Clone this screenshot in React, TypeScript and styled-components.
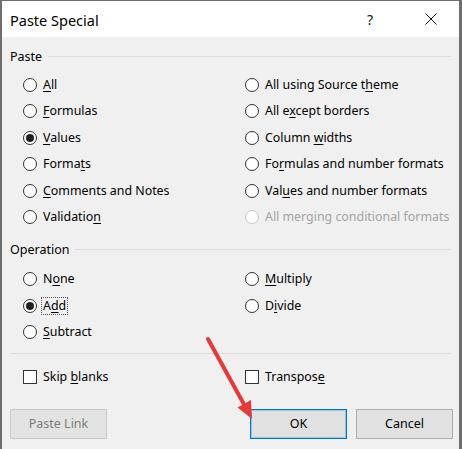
import * as React from "react";
import styled, { createGlobalStyle } from "styled-components";

const GlobalStyle = createGlobalStyle`
  html, body {
    margin: 0;
    padding: 0;
    background: #f0f0f0;
  }
  body {
    font-family: "Noto Sans", "Open Sans", sans-serif;
    color: #000;
  }
`;

const Window = styled.div`
  position: relative;
  box-sizing: border-box;
  width: 462px;
  height: 449px;
  border-left: 2px solid #6e6e6e;
  border-top: 1px solid #6e6e6e;
  border-right: 3px solid #6e6e6e;
  background: #f0f0f0;
  display: flex;
  flex-direction: column;
  overflow: hidden;
`;

const TitleBar = styled.div`
  height: 36px;
  background: #fff;
  display: flex;
  align-items: center;
  padding: 0 0 0 8px;
`;

const Title = styled.div`
  flex: 1;
  font-size: 14.5px;
  line-height: 20px;
  padding-top: 1px;
`;

const HelpButton = styled.div`
  width: 20px;
  text-align: center;
  font-size: 14px;
  margin-right: 36px;
  color: #111;
`;

const CloseButton = styled.div`
  width: 30px;
  display: flex;
  justify-content: center;
  margin-right: 13px;
`;

const Body = styled.div`
  flex: 1;
  padding: 0 6px 0 8px;
  display: flex;
  flex-direction: column;
`;

const GroupHeader = styled.div<{ $top: number }>`
  display: flex;
  align-items: center;
  height: 18px;
  margin-top: ${(p) => p.$top}px;
  font-size: 12.5px;
`;

const HeaderLine = styled.div`
  flex: 1;
  height: 1px;
  background: #dcdcdc;
  margin: 0 2px 0 6px;
`;

const Separator = styled.div`
  height: 1px;
  background: #dcdcdc;
  margin: 7px 2px 0 0;
`;

const OptionGrid = styled.div<{ $top: number }>`
  display: grid;
  grid-template-columns: 222px 1fr;
  grid-auto-rows: 26.5px;
  margin: ${(p) => p.$top}px 0 0 13px;
`;

const Option = styled.label<{ $disabled?: boolean }>`
  display: flex;
  align-items: center;
  gap: 6px;
  font-size: 12.4px;
  white-space: nowrap;
  color: ${(p) => (p.$disabled ? "#a3a3a3" : "#000")};
`;

const Radio = styled.span<{ $checked?: boolean; $disabled?: boolean }>`
  box-sizing: border-box;
  width: 14px;
  height: 14px;
  border-radius: 50%;
  border: 1px solid ${(p) => (p.$disabled ? "#c6c6c6" : "#333")};
  background: #fff;
  display: flex;
  align-items: center;
  justify-content: center;
  flex-shrink: 0;
  &::after {
    content: "";
    width: 8px;
    height: 8px;
    border-radius: 50%;
    background: ${(p) => (p.$checked ? "#222" : "transparent")};
  }
`;

const Checkbox = styled.span`
  box-sizing: border-box;
  width: 14px;
  height: 14px;
  border: 1px solid #333;
  background: #fff;
  flex-shrink: 0;
`;

const Label = styled.span<{ $focused?: boolean }>`
  padding: 0 1px;
  margin-left: -1px;
  line-height: 16px;
  outline: ${(p) => (p.$focused ? "1px dotted #555" : "none")};
  outline-offset: 0;
  u {
    text-decoration: underline;
    text-underline-offset: 2px;
    text-decoration-thickness: 1px;
  }
`;

const Buttons = styled.div`
  display: flex;
  margin-top: 18.5px;
`;

const Button = styled.div<{ $variant?: "disabled" | "default" | "normal" }>`
  box-sizing: border-box;
  width: 97px;
  height: 30px;
  display: flex;
  align-items: center;
  justify-content: center;
  font-size: 12.5px;
  background: ${(p) => (p.$variant === "disabled" ? "#e3e3e3" : "#e1e1e1")};
  color: ${(p) => (p.$variant === "disabled" ? "#7d7d7d" : "#000")};
  border: 1px solid
    ${(p) =>
      p.$variant === "default"
        ? "#0078d7"
        : p.$variant === "disabled"
        ? "#cbcbcb"
        : "#adadad"};
  box-shadow: ${(p) =>
    p.$variant === "default" ? "inset 0 0 0 1px rgba(0,120,215,0.3)" : "none"};
`;

const Spacer = styled.div`
  flex: 1;
`;

const ButtonGap = styled.div`
  width: 9px;
`;

const Arrow = styled.svg`
  position: absolute;
  left: -2px;
  top: -1px;
  pointer-events: none;
`;

type Opt = {
  pre: string;
  key?: string;
  post?: string;
  checked?: boolean;
  disabled?: boolean;
  focused?: boolean;
};

const pasteOptions: (Opt | null)[] = [
  { pre: "", key: "A", post: "ll" },
  { pre: "All using Source t", key: "h", post: "eme" },
  { pre: "", key: "F", post: "ormulas" },
  { pre: "All e", key: "x", post: "cept borders" },
  { pre: "", key: "V", post: "alues", checked: true },
  { pre: "Column ", key: "w", post: "idths" },
  { pre: "Forma", key: "t", post: "s" },
  { pre: "Fo", key: "r", post: "mulas and number formats" },
  { pre: "", key: "C", post: "omments and Notes" },
  { pre: "Val", key: "u", post: "es and number formats" },
  { pre: "Validatio", key: "n", post: "" },
  { pre: "All merging conditional formats", disabled: true },
];

const operationOptions: (Opt | null)[] = [
  { pre: "N", key: "o", post: "ne" },
  { pre: "", key: "M", post: "ultiply" },
  { pre: "A", key: "d", post: "d", checked: true, focused: true },
  { pre: "D", key: "i", post: "vide" },
  { pre: "", key: "S", post: "ubtract" },
  null,
];

const RadioOption = ({ o }: { o: Opt }) => (
  <Option $disabled={o.disabled}>
    <Radio $checked={o.checked} $disabled={o.disabled} />
    <Label $focused={o.focused}>
      {o.pre}
      {o.key && <u>{o.key}</u>}
      {o.post}
    </Label>
  </Option>
);

export default function App() {
  return (
    <>
      <GlobalStyle />
      <Window>
        <TitleBar>
          <Title>Paste Special</Title>
          <HelpButton>?</HelpButton>
          <CloseButton>
            <svg width="12" height="12" viewBox="0 0 12 12">
              <path d="M0.5 0.5 L11.5 11.5 M11.5 0.5 L0.5 11.5" stroke="#111" strokeWidth="1" />
            </svg>
          </CloseButton>
        </TitleBar>
        <Body>
          <GroupHeader $top={10}>
            Paste
            <HeaderLine />
          </GroupHeader>
          <OptionGrid $top={6.5}>
            {pasteOptions.map((o, i) => (o ? <RadioOption key={i} o={o} /> : <div key={i} />))}
          </OptionGrid>
          <GroupHeader $top={10}>
            Operation
            <HeaderLine />
          </GroupHeader>
          <OptionGrid $top={7.5}>
            {operationOptions.map((o, i) => (o ? <RadioOption key={i} o={o} /> : <div key={i} />))}
          </OptionGrid>
          <Separator />
          <OptionGrid $top={10}>
            <Option>
              <Checkbox />
              <Label>
                Skip <u>b</u>lanks
              </Label>
            </Option>
            <Option>
              <Checkbox />
              <Label>
                Transpos<u>e</u>
              </Label>
            </Option>
          </OptionGrid>
          <Buttons>
            <Button $variant="disabled">Paste Link</Button>
            <Spacer />
            <Button $variant="default">OK</Button>
            <ButtonGap />
            <Button $variant="normal">Cancel</Button>
          </Buttons>
        </Body>
        <Arrow width="462" height="449" viewBox="0 0 462 449">
          <line x1="208" y1="339" x2="246" y2="408" stroke="#e63a3a" strokeWidth="4" strokeLinecap="round" />
          <polygon points="252,419 237.5,407.5 251,400" fill="#e63a3a" />
        </Arrow>
      </Window>
    </>
  );
}
